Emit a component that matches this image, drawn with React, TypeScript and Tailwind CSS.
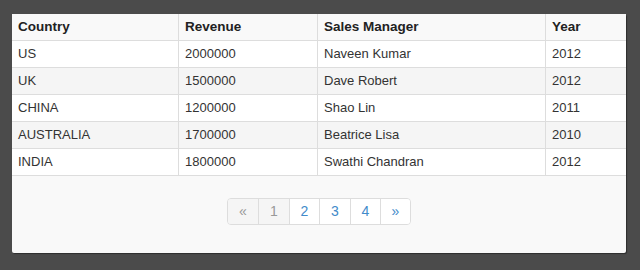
import React from 'react'

const rows = [
  ['US', '2000000', 'Naveen Kumar', '2012'],
  ['UK', '1500000', 'Dave Robert', '2012'],
  ['CHINA', '1200000', 'Shao Lin', '2011'],
  ['AUSTRALIA', '1700000', 'Beatrice Lisa', '2010'],
  ['INDIA', '1800000', 'Swathi Chandran', '2012'],
]

const widths = ['w-[166px]', 'w-[139px]', 'w-[228px]', 'w-[81px]']
const headers = ['Country', 'Revenue', 'Sales Manager', 'Year']

export default function App() {
  return (
    <div className="w-[640px] h-[270px] bg-[#4b4b4b] pt-[14px] pl-[12px] font-['Liberation_Sans',Arial,sans-serif] text-[13px] text-[#333]">
      <div className="w-[614px] h-[239px] bg-[#f9f9f9] rounded-[2px] shadow-[1px_1px_1px_rgba(0,0,0,0.4)] flex flex-col">
        <div className="flex h-[27px] border-b border-[#ddd] bg-[#f9f9f9]">
          {headers.map((h, i) => (
            <div key={h} className={`${widths[i]} flex items-center px-[6px] font-bold text-[13.5px] text-[#222] ${i > 0 ? 'border-l border-[#ddd]' : ''}`}>{h}</div>
          ))}
        </div>
        {rows.map((r, ri) => (
          <div key={r[0]} className={`flex h-[27px] border-b border-[#ddd] ${ri % 2 === 1 ? 'bg-[#f5f5f5]' : 'bg-white'}`}>
            {r.map((c, i) => (
              <div key={i} className={`${widths[i]} flex items-center px-[6px] ${i > 0 ? 'border-l border-[#ddd]' : ''}`}>{c}</div>
            ))}
          </div>
        ))}
        <div className="flex justify-center pt-[22px]">
          <div className="flex h-[27px] border border-[#ddd] rounded-[4px] overflow-hidden text-[14px]">
            <span className="w-[30px] flex items-center justify-center bg-[#f5f5f5] text-[#999]">«</span>
            <span className="w-[31px] flex items-center justify-center bg-[#f5f5f5] text-[#999] border-l border-[#ddd]">1</span>
            <span className="w-[30px] flex items-center justify-center bg-white text-[#428bca] border-l border-[#ddd]">2</span>
            <span className="w-[31px] flex items-center justify-center bg-white text-[#428bca] border-l border-[#ddd]">3</span>
            <span className="w-[30px] flex items-center justify-center bg-white text-[#428bca] border-l border-[#ddd]">4</span>
            <span className="w-[30px] flex items-center justify-center bg-white text-[#428bca] border-l border-[#ddd]">»</span>
          </div>
        </div>
      </div>
    </div>
  )
}
